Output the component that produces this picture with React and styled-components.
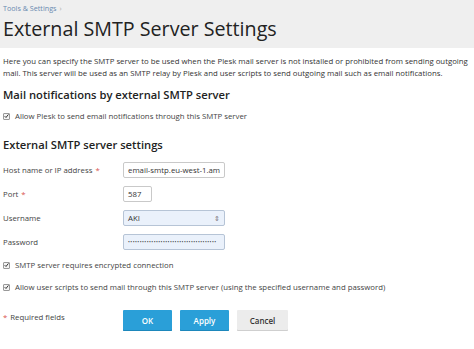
import React from "react";
import styled, { createGlobalStyle } from "styled-components";

const GlobalStyle = createGlobalStyle`
body {
  margin: 0;
  background: #fff;
  font-family: "Open Sans", "Liberation Sans", sans-serif;
  color: #333;
}
* { box-sizing: border-box; }
`;

const Header = styled.div`
  background: #efefef;
  height: 48px;
  padding: 3px 3px 0;
`;

const Breadcrumb = styled.div`
  font-size: 7.2px;
  line-height: 10px;
  color: #6a8ab0;
  span { color: #aaa; margin-left: 3px; }
`;

const Title = styled.h1`
  margin: 3px 0 0;
  font-size: 19.7px;
  line-height: 26px;
  font-weight: 400;
  color: #222;
`;

const Content = styled.div`
  padding: 8px 3px 0;
  font-size: 7.8px;
`;

const Intro = styled.p`
  margin: 0;
  line-height: 11.5px;
  color: #333;
`;

const SectionTitle = styled.h2`
  margin: ${(p) => p.top}px 0 0;
  font-size: 11.2px;
  line-height: 16px;
  font-weight: 600;
  color: #222;
`;

const CheckRow = styled.label`
  display: flex;
  align-items: center;
  gap: 5px;
  margin-top: ${(p) => p.top}px;
  line-height: 12px;
  color: #444;
`;

const Box = styled.span`
  width: 7px;
  height: 7px;
  border: 1px solid #999;
  border-radius: 1px;
  background: #f4f4f4;
  display: flex;
  align-items: center;
  justify-content: center;
  svg { display: block; }
`;

const Form = styled.div`
  display: grid;
  grid-template-columns: 120px auto;
  row-gap: 8px;
  align-items: center;
  margin-top: 9px;
`;

const Label = styled.div`
  color: #444;
  line-height: 16px;
`;

const Req = styled.span`
  color: #d9534f;
  margin-left: 3px;
`;

const Field = styled.div`
  width: ${(p) => p.w}px;
  height: 16px;
  border: 1px solid ${(p) => (p.filled ? "#b6c4d6" : "#c9c9c9")};
  background: ${(p) => (p.filled ? "#eaf1fb" : "#fff")};
  border-radius: 2px;
  padding: 0 4px;
  display: flex;
  align-items: center;
  justify-content: space-between;
  color: #333;
  font-size: 7.8px;
  white-space: nowrap;
  overflow: hidden;
`;

const Dots = styled.span`
  font-size: 5px;
  letter-spacing: 0.45px;
  color: #444;
`;

const Arrows = styled.span`
  font-size: 7px;
  color: #777;
  line-height: 1;
`;

const Footer = styled.div`
  display: flex;
  align-items: center;
  margin-top: 17px;
`;

const Note = styled.div`
  width: 120px;
  color: #444;
  margin-top: -8px;
  span { color: #d9534f; margin-right: 3px; }
`;

const Buttons = styled.div`
  display: flex;
  gap: 8px;
`;

const Button = styled.button`
  width: ${(p) => (p.secondary ? 51 : 49)}px;
  height: 21px;
  border: none;
  border-radius: 1px;
  font-family: inherit;
  font-size: 8px;
  font-weight: 600;
  color: ${(p) => (p.secondary ? "#333" : "#fff")};
  background: ${(p) => (p.secondary ? "#ececec" : "#2a9fd8")};
  box-shadow: ${(p) => (p.secondary ? "inset 0 -1px 0 #cfcfcf" : "inset 0 -1px 0 #1d87bb")};
  padding: 0;
`;

const Check = () => (
  <Box>
    <svg width="6" height="6" viewBox="0 0 6 6">
      <path d="M0.8 3.2 L2.4 4.8 L5.3 1.1" stroke="#333" strokeWidth="1.2" fill="none" />
    </svg>
  </Box>
);

const App = () => (
  <>
    <GlobalStyle />
    <Header>
      <Breadcrumb>
        Tools &amp; Settings<span>&rsaquo;</span>
      </Breadcrumb>
      <Title>External SMTP Server Settings</Title>
    </Header>
    <Content>
      <Intro>
        Here you can specify the SMTP server to be used when the Plesk mail server is not installed or prohibited from sending outgoing
        mail. This server will be used as an SMTP relay by Plesk and user scripts to send outgoing mail such as email notifications.
      </Intro>
      <SectionTitle top={8}>Mail notifications by external SMTP server</SectionTitle>
      <CheckRow top={7}>
        <Check />
        Allow Plesk to send email notifications through this SMTP server
      </CheckRow>
      <SectionTitle top={15}>External SMTP server settings</SectionTitle>
      <Form>
        <Label>
          Host name or IP address<Req>*</Req>
        </Label>
        <Field w={102}>email-smtp.eu-west-1.am</Field>
        <Label>
          Port<Req>*</Req>
        </Label>
        <Field w={29}>587</Field>
        <Label>Username</Label>
        <Field w={102} filled>
          <span>AKI&#8203;</span>
          <Arrows>&#8661;</Arrows>
        </Field>
        <Label>Password</Label>
        <Field w={102} filled>
          <Dots>{"•".repeat(38)}</Dots>
        </Field>
      </Form>
      <CheckRow top={9}>
        <Check />
        SMTP server requires encrypted connection
      </CheckRow>
      <CheckRow top={10}>
        <Check />
        Allow user scripts to send mail through this SMTP server (using the specified username and password)
      </CheckRow>
      <Footer>
        <Note>
          <span>*</span>Required fields
        </Note>
        <Buttons>
          <Button>OK</Button>
          <Button>Apply</Button>
          <Button secondary>Cancel</Button>
        </Buttons>
      </Footer>
    </Content>
  </>
);

export default App;
